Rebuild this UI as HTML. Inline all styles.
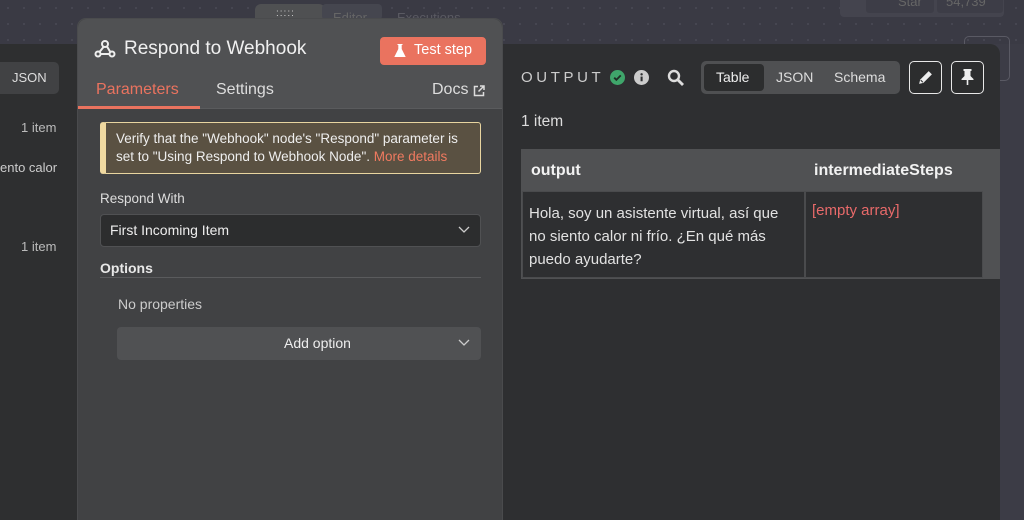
<!DOCTYPE html>
<html><head><meta charset="utf-8"><style>
*{box-sizing:border-box;margin:0;padding:0}
body{width:1024px;height:520px;overflow:hidden;background:#3c3c46;font-family:"Liberation Sans","DejaVu Sans",sans-serif;position:relative;color:#e8e8e8}
.abs{position:absolute}
.top{left:0;top:0;width:1024px;height:44px;background:#3a3a44;background-image:radial-gradient(#4a4a55 1px,transparent 1px);background-size:16px 16px}
.left{left:0;top:44px;width:78px;height:476px;background:#2e2f30}
.right{left:500px;top:44px;width:500px;height:476px;background:#2e2f31;border-top-right-radius:10px}
.center{left:77px;top:18px;width:426px;height:502px;background:#414244;border-radius:9px 9px 0 0;border:1px solid #4a4b4d;border-bottom:none}
.chead{left:0;top:0;width:424px;height:90px;background:#505153;border-radius:9px 9px 0 0;border-bottom:1px solid #5a5b5d}
.txt{white-space:nowrap}
</style></head><body>
<div class="abs top"></div>
<div class="abs" style="left:255px;top:4px;width:70px;height:20px;background:#4f5052;border-radius:6px 6px 0 0"></div>
<div class="abs txt" style="left:276px;top:8px;color:#ccc;font-size:10px;letter-spacing:1px">:::::</div>
<div class="abs" style="left:322px;top:4px;width:60px;height:16px;background:#45464f;border-radius:4px"></div>
<div class="abs txt" style="left:333px;top:10px;color:#666;font-size:13px">Editor</div>
<div class="abs txt" style="left:397px;top:10px;color:#5a5a62;font-size:13px">Executions</div>
<div class="abs" style="left:840px;top:0;width:164px;height:17px;background:#44444e;border-radius:0 0 4px 4px"></div>
<div class="abs" style="left:866px;top:0;width:68px;height:13px;background:#3d3d47;border-radius:0 0 3px 3px"></div>
<div class="abs txt" style="left:898px;top:-6px;color:#666;font-size:13px">Star</div>
<div class="abs" style="left:937px;top:0;width:66px;height:13px;background:#3d3d47;border-radius:0 0 3px 3px"></div>
<div class="abs txt" style="left:946px;top:-6px;color:#666;font-size:13px">54,739</div>
<div class="abs" style="left:964px;top:36px;width:46px;height:45px;border:1px solid #5a5a64;border-radius:5px"></div>

<div class="abs left">
  <div class="abs" style="left:-10px;top:18px;width:69px;height:32px;background:#414244;border-radius:5px"></div>
  <div class="abs txt" style="left:12px;top:26px;font-size:13px;color:#ddd">JSON</div>
  <div class="abs txt" style="left:21px;top:76px;font-size:13px;color:#bbb">1 item</div>
  <div class="abs txt" style="left:0;top:116px;font-size:13px;color:#ccc">ento calor</div>
  <div class="abs txt" style="left:21px;top:195px;font-size:13px;color:#bbb">1 item</div>
</div>

<div class="abs right">
  <div class="abs txt" style="left:21px;top:25px;font-size:15px;letter-spacing:3.6px;color:#ccc">OUTPUT</div>
  <svg class="abs" style="left:110px;top:26px" width="15" height="15" viewBox="0 0 16 16"><circle cx="8" cy="8" r="8" fill="#3fa66b"/><path d="M4.5 8.2l2.3 2.3 4.7-4.8" stroke="#1f2f26" stroke-width="2" fill="none"/></svg>
  <svg class="abs" style="left:134px;top:26px" width="15" height="15" viewBox="0 0 16 16"><circle cx="8" cy="8" r="8" fill="#ccc"/><rect x="7" y="7" width="2.2" height="5" fill="#2e2f31"/><circle cx="8.1" cy="4.6" r="1.3" fill="#2e2f31"/></svg>
  <svg class="abs" style="left:167px;top:25px" width="18" height="18" viewBox="0 0 18 18"><circle cx="7" cy="7" r="5" stroke="#ddd" stroke-width="2.4" fill="none"/><path d="M11 11l5 5" stroke="#ddd" stroke-width="2.8"/></svg>
  <div class="abs" style="left:201px;top:17px;width:199px;height:33px;background:#4f5052;border-radius:5px"></div>
  <div class="abs" style="left:204px;top:20px;width:60px;height:27px;background:#2c2d2e;border-radius:4px"></div>
  <div class="abs txt" style="left:216px;top:25px;font-size:14px;color:#eee">Table</div>
  <div class="abs txt" style="left:276px;top:25px;font-size:14px;color:#ddd">JSON</div>
  <div class="abs txt" style="left:334px;top:25px;font-size:14px;color:#ddd">Schema</div>
  <div class="abs" style="left:409px;top:17px;width:33px;height:33px;border:1.5px solid #e8e8e8;border-radius:5px;background:#2c2d2e"></div>
  <svg class="abs" style="left:417px;top:25px" width="17" height="17" viewBox="0 0 16 16"><path d="M2 14l1-4 8-8 3 3-8 8z" fill="#eee"/><path d="M3.5 10.5l2 2" stroke="#2c2d2e" stroke-width="1"/></svg>
  <div class="abs" style="left:451px;top:17px;width:33px;height:33px;border:1.5px solid #e8e8e8;border-radius:5px;background:#2c2d2e"></div>
  <svg class="abs" style="left:459px;top:24px" width="17" height="18" viewBox="0 0 16 18"><path d="M4 1h8v2h-1v5l3 3v1H2v-1l3-3V3H4z" fill="#eee"/><rect x="7.2" y="12" width="1.6" height="5" fill="#eee"/></svg>
  <div class="abs txt" style="left:21px;top:69px;font-size:15.5px;color:#ddd">1 item</div>
  <div class="abs" style="left:21px;top:105px;width:479px;height:130px;background:#505153"></div>
  <div class="abs txt" style="left:31px;top:118px;font-size:16px;font-weight:bold;color:#f2f2f2">output</div>
  <div class="abs txt" style="left:314px;top:118px;font-size:16px;font-weight:bold;color:#f2f2f2">intermediateSteps</div>
  <div class="abs" style="left:22px;top:147px;width:283px;height:87px;background:#2e2f31;border:1px solid #4a4b4d"></div>
  <div class="abs" style="left:305px;top:147px;width:178px;height:87px;background:#2e2f31;border:1px solid #4a4b4d"></div>
  <div class="abs" style="left:29px;top:158px;width:268px;font-size:15px;line-height:23px;color:#e2e2e2">Hola, soy un asistente virtual, así que no siento calor ni frío. ¿En qué más puedo ayudarte?</div>
  <div class="abs txt" style="left:312px;top:158px;font-size:15px;color:#e86a6a">[empty array]</div>
</div>

<div class="abs center">
  <div class="abs chead"></div>
  <svg class="abs" style="left:16px;top:20px" width="22" height="20" viewBox="0 0 22 20" fill="none" stroke="#eee" stroke-width="2"><circle cx="11" cy="5" r="3"/><circle cx="4" cy="15" r="2.5"/><circle cx="18" cy="15" r="2.5"/><path d="M9.5 8L5.5 13M13 7.5l3 5M7 15h8"/></svg>
  <div class="abs txt" style="left:46px;top:19px;font-size:19px;color:#f0f0f0">Respond to Webhook</div>
  <div class="abs" style="left:302px;top:18px;width:106px;height:28px;background:#ea735f;border-radius:4px"></div>
  <svg class="abs" style="left:316px;top:25px" width="12" height="14" viewBox="0 0 12 14"><path d="M3.5 0h5v1h-.8v4l4 8H.3l4-8V1h-.8z" fill="#fff"/></svg>
  <div class="abs txt" style="left:336px;top:23px;font-size:14.5px;color:#fff">Test step</div>
  <div class="abs txt" style="left:18px;top:62px;font-size:16px;color:#ea735f">Parameters</div>
  <div class="abs" style="left:0;top:87px;width:122px;height:3px;background:#ea735f"></div>
  <div class="abs txt" style="left:138px;top:62px;font-size:16px;color:#ddd">Settings</div>
  <div class="abs txt" style="left:354px;top:62px;font-size:16px;color:#ddd">Docs</div>
  <svg class="abs" style="left:395px;top:66px" width="12" height="12" viewBox="0 0 12 12" fill="none" stroke="#ddd" stroke-width="1.5"><path d="M5 1.5H1.5v9h9V7M7 1h4v4M11 1L5.5 6.5"/></svg>
  <div class="abs" style="left:22px;top:103px;width:381px;height:52px;background:#5a5142;border:1px solid #e8d5a0;border-left:6px solid #f0d9a0;border-radius:3px"></div>
  <div class="abs" style="left:38px;top:111px;width:356px;font-size:13.5px;line-height:18px;color:#eee">Verify that the "Webhook" node's "Respond" parameter is set to "Using Respond to Webhook Node". <span style="color:#f07a60">More details</span></div>
  <div class="abs txt" style="left:22px;top:172px;font-size:13.5px;color:#ddd">Respond With</div>
  <div class="abs" style="left:22px;top:195px;width:381px;height:33px;background:#2c2d2e;border:1px solid #505153;border-radius:4px"></div>
  <div class="abs txt" style="left:32px;top:203px;font-size:14px;color:#eee">First Incoming Item</div>
  <svg class="abs" style="left:380px;top:207px" width="12" height="8" viewBox="0 0 12 8"><path d="M1 1l5 5 5-5" stroke="#ccc" stroke-width="1.3" fill="none"/></svg>
  <div class="abs txt" style="left:22px;top:241px;font-size:14px;font-weight:bold;color:#e8e8e8">Options</div>
  <div class="abs" style="left:22px;top:258px;width:381px;height:1px;background:#5a5b5d"></div>
  <div class="abs txt" style="left:40px;top:277px;font-size:14px;color:#ccc">No properties</div>
  <div class="abs" style="left:39px;top:308px;width:364px;height:33px;background:#505153;border-radius:4px"></div>
  <div class="abs txt" style="left:206px;top:316px;font-size:14px;color:#eee">Add option</div>
  <svg class="abs" style="left:380px;top:320px" width="12" height="8" viewBox="0 0 12 8"><path d="M1 1l5 5 5-5" stroke="#ccc" stroke-width="1.3" fill="none"/></svg>
</div>
</body></html>
